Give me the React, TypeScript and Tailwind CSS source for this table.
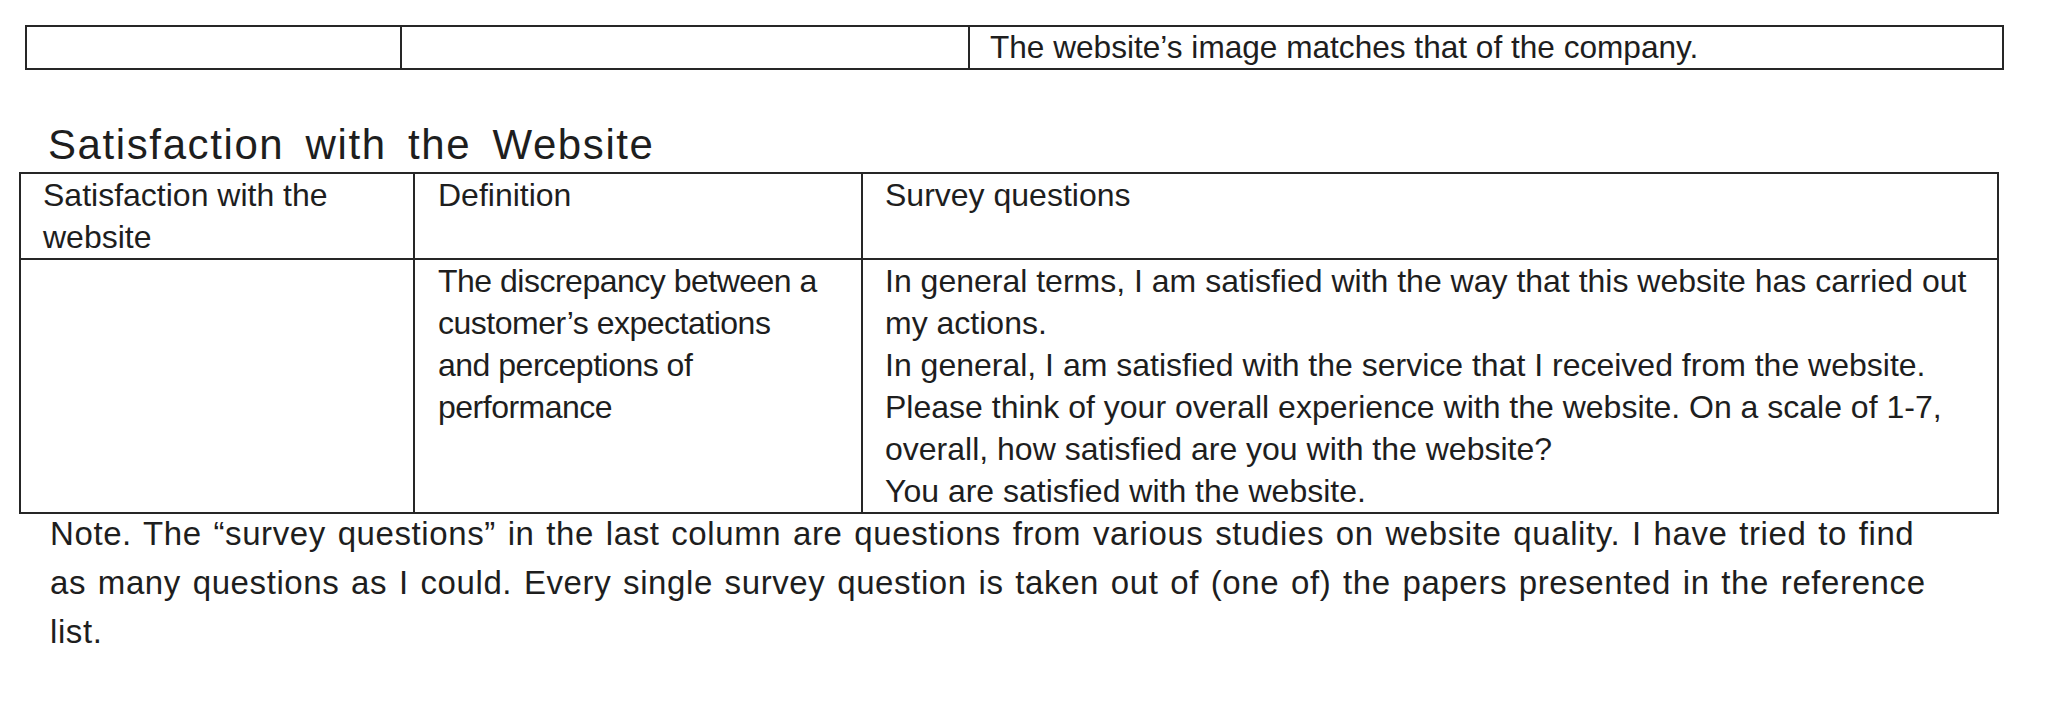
const FONT = "font-['Liberation_Sans',Arial,sans-serif]";

const SURVEY = [
  "In general terms, I am satisfied with the way that this website has carried out",
  "my actions.",
  "In general, I am satisfied with the service that I received from the website.",
  "Please think of your overall experience with the website. On a scale of 1-7,",
  "overall, how satisfied are you with the website?",
  "You are satisfied with the website.",
];

const DEFINITION = [
  "The discrepancy between a",
  "customer’s expectations",
  "and perceptions of",
  "performance",
];

const NOTE = [
  "Note. The “survey questions” in the last column are questions from various studies on website quality. I have tried to find",
  "as many questions as I could. Every single survey question is taken out of (one of) the papers presented in the reference",
  "list.",
];

function Lines({ lines }: { lines: string[] }) {
  return (
    <>
      {lines.map((l, i) => (
        <div key={i} className="whitespace-nowrap">{l}</div>
      ))}
    </>
  );
}

export default function App() {
  return (
    <div className={`${FONT} bg-white text-[#1e1e1e] w-[2046px] h-[724px] overflow-hidden pt-[25px]`}>
      {/* tail of the previous table */}
      <div className="ml-[25px] w-[1979px] h-[45px] flex border-2 border-[#262626] text-[31.6px]">
        <div className="w-[375px] border-r-2 border-[#262626]" />
        <div className="w-[568px] border-r-2 border-[#262626]" />
        <div className="flex-1 pl-[20px] flex items-center whitespace-nowrap">
          The website’s image matches that of the company.
        </div>
      </div>

      <h2 className="mt-[51px] ml-[48px] text-[42px] leading-[48px] tracking-[1.6px] [word-spacing:8px]">
        Satisfaction with the Website
      </h2>

      <div className="mt-[3px] ml-[19px] w-[1980px] border-2 border-[#262626] text-[32px] leading-[42px]">
        <div className="flex border-b-2 border-[#262626]">
          <div className="w-[394px] border-r-2 border-[#262626] pl-[22px]">
            <div>Satisfaction with the</div>
            <div>website</div>
          </div>
          <div className="w-[448px] border-r-2 border-[#262626] pl-[23px]">Definition</div>
          <div className="flex-1 pl-[22px]">Survey questions</div>
        </div>
        <div className="flex">
          <div className="w-[394px] border-r-2 border-[#262626]" />
          <div className="w-[448px] border-r-2 border-[#262626] pl-[23px] tracking-[-0.5px]">
            <Lines lines={DEFINITION} />
          </div>
          <div className="flex-1 pl-[22px]">
            <Lines lines={SURVEY} />
          </div>
        </div>
      </div>

      <div className="-mt-[5px] ml-[50px] text-[33px] leading-[49px] tracking-[0.6px] [word-spacing:2px]">
        <Lines lines={NOTE} />
      </div>
    </div>
  );
}
